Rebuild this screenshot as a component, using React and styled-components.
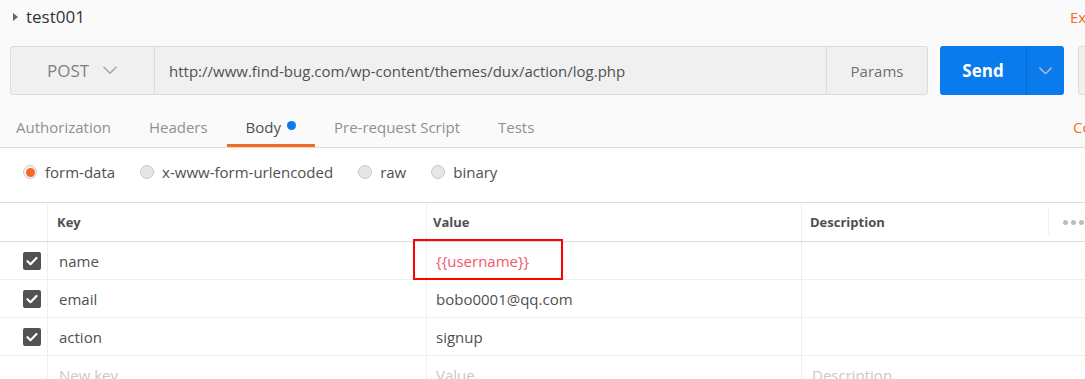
import React from "react";
import styled, { createGlobalStyle } from "styled-components";

const Global = createGlobalStyle`
  html, body { margin: 0; padding: 0; background: #fff; overflow: hidden; }
  body { font-family: "Open Sans", "Noto Sans", sans-serif; color: #505050; }
  * { box-sizing: border-box; }
`;

const Viewport = styled.div`
  width: 100vw;
  height: 100vh;
  overflow: hidden;
`;

const Page = styled.div`
  width: 1200px;
`;

const Top = styled.div`
  background: #fafafa;
`;

const TitleRow = styled.div`
  display: grid;
  grid-template-columns: 1070px auto;
  height: 33px;
  align-items: center;
`;

const Title = styled.div`
  display: flex;
  align-items: center;
  padding-left: 13px;
  color: #333;
  gap: 8px;
  font-size: 17px;
`;

const Caret = styled.span`
  width: 0;
  height: 0;
  border-top: 4px solid transparent;
  border-bottom: 4px solid transparent;
  border-left: 5px solid #666;
`;

const OrangeLink = styled.span`
  color: #f47023;
  font-size: 15px;
  white-space: nowrap;
`;

const UrlRow = styled.div`
  display: flex;
  margin-top: 13px;
  padding-left: 10px;
  height: 49px;
`;

const UrlGroup = styled.div`
  display: flex;
  width: 918px;
  background: #f0f0f0;
  border: 1px solid #dcdcdc;
  border-radius: 3px;
`;

const Method = styled.div`
  width: 144px;
  display: flex;
  align-items: center;
  padding-left: 36px;
  gap: 14px;
  font-size: 17px;
  color: #808080;
  border-right: 1px solid #dcdcdc;
`;

const UrlInput = styled.div`
  flex: 1;
  display: flex;
  align-items: center;
  padding-left: 14px;
  font-size: 15px;
  color: #505050;
  border-right: 1px solid #dcdcdc;
`;

const Params = styled.div`
  width: 100px;
  display: flex;
  align-items: center;
  justify-content: center;
  font-size: 15px;
  color: #707070;
`;

const SendGroup = styled.div`
  display: flex;
  margin-left: 12px;
  width: 124px;
  background: #097bed;
  border-radius: 3px;
  overflow: hidden;
`;

const SendMain = styled.div`
  width: 87px;
  display: flex;
  align-items: center;
  justify-content: center;
  color: #fff;
  font-weight: 700;
  font-size: 17px;
  border-right: 1px solid #0a68c8;
`;

const SendDrop = styled.div`
  flex: 1;
  display: flex;
  align-items: center;
  justify-content: center;
`;

const SaveBox = styled.div`
  margin-left: 14px;
  width: 100px;
  background: #f0f0f0;
  border: 1px solid #dcdcdc;
  border-radius: 3px;
`;

const TabBar = styled.div`
  display: grid;
  grid-template-columns: 1073px auto;
  margin-top: 10px;
  height: 43px;
  border-bottom: 1px solid #dcdcdc;
  align-items: stretch;
`;

const Tabs = styled.div`
  display: flex;
`;

const Tab = styled.div`
  position: relative;
  display: flex;
  align-items: center;
  gap: 6px;
  padding: 2px 19px 0;
  font-size: 15px;
  color: ${(p) => (p.$active ? "#505050" : "#909090")};
  &::after {
    content: "";
    position: absolute;
    left: 0;
    right: 0;
    bottom: 0;
    height: 3px;
    background: ${(p) => (p.$active ? "#f26b21" : "transparent")};
  }
  &:first-child { padding-left: 16px; }
`;

const Dot = styled.span`
  width: 9px;
  height: 9px;
  border-radius: 50%;
  background: #097bed;
  margin-top: -3px;
`;

const CookiesWrap = styled.div`
  display: flex;
  align-items: center;
  padding-top: 2px;
`;

const RadioRow = styled.div`
  display: flex;
  align-items: center;
  height: 54px;
  padding: 0 0 6px 23px;
  font-size: 15px;
`;

const RadioItem = styled.label`
  display: flex;
  align-items: center;
  gap: 8px;
  margin-right: ${(p) => p.$mr}px;
  color: #505050;
`;

const RadioCircle = styled.span`
  width: 14px;
  height: 14px;
  border-radius: 50%;
  border: 1px solid #c8c8c8;
  background: ${(p) => (p.$on ? "#f4f4f4" : "#e6e6e6")};
  display: flex;
  align-items: center;
  justify-content: center;
  &::after {
    content: "";
    width: 9px;
    height: 9px;
    border-radius: 50%;
    background: ${(p) => (p.$on ? "#f26b21" : "transparent")};
  }
`;

const Table = styled.div`
  border-top: 1px solid #dcdcdc;
`;

const Row = styled.div`
  position: relative;
  display: grid;
  grid-template-columns: 47px 379px 375px 247px 152px;
  height: ${(p) => (p.$head ? 39 : 38)}px;
  border-bottom: 1px solid ${(p) => (p.$head ? "#dcdcdc" : "#efefef")};
`;

const Cell = styled.div`
  display: flex;
  align-items: center;
  padding-left: ${(p) => p.$pl ?? 11}px;
  border-left: ${(p) => (p.$first ? "none" : "1px solid #efefef")};
  font-size: ${(p) => (p.$head ? 13 : 15)}px;
  font-weight: ${(p) => (p.$head ? 700 : 400)};
  color: ${(p) => (p.$ph ? "#c8c8c8" : p.$var ? "#f2576a" : "#505050")};
  white-space: nowrap;
`;

const CheckCell = styled.div`
  display: flex;
  align-items: center;
  padding-left: 23px;
`;

const CheckBox = styled.span`
  width: 18px;
  height: 18px;
  border-radius: 2px;
  background: #525252;
  display: flex;
  align-items: center;
  justify-content: center;
`;

const MoreCell = styled.div`
  display: flex;
  align-items: center;
  padding-left: 15px;
  gap: 3px;
  &::before {
    content: "";
    position: absolute;
    margin-left: -15px;
    height: 26px;
    border-left: 1px solid #efefef;
  }
`;

const MoreDot = styled.span`
  width: 5px;
  height: 5px;
  border-radius: 50%;
  background: #bdbdbd;
`;

const Highlight = styled.div`
  position: absolute;
  left: 413px;
  top: -3px;
  width: 150px;
  height: 41px;
  border: 2px solid #ff0000;
  pointer-events: none;
`;

const Chevron = ({ color, size = 14 }) => (
  <svg width={size} height={size * 0.6} viewBox="0 0 14 8" fill="none">
    <path d="M1 1l6 6 6-6" stroke={color} strokeWidth="1.6" strokeLinecap="round" strokeLinejoin="round" />
  </svg>
);

const Check = () => (
  <svg width="12" height="10" viewBox="0 0 12 10" fill="none">
    <path d="M1.5 5.2l3 3L10.5 2" stroke="#fff" strokeWidth="2.2" strokeLinecap="round" strokeLinejoin="round" />
  </svg>
);

const rows = [
  { key: "name", value: "{{username}}", isVar: true, mark: true },
  { key: "email", value: "bobo0001@qq.com" },
  { key: "action", value: "signup" },
];

export default function App() {
  return (
    <Viewport>
      <Global />
      <Page>
        <Top>
          <TitleRow>
            <Title>
              <Caret />
              test001
            </Title>
            <OrangeLink>Examples (0)</OrangeLink>
          </TitleRow>
          <UrlRow>
            <UrlGroup>
              <Method>
                POST
                <Chevron color="#a8a8a8" size={14} />
              </Method>
              <UrlInput>http://www.find-bug.com/wp-content/themes/dux/action/log.php</UrlInput>
              <Params>Params</Params>
            </UrlGroup>
            <SendGroup>
              <SendMain>Send</SendMain>
              <SendDrop>
                <Chevron color="#b2bccb" size={13} />
              </SendDrop>
            </SendGroup>
            <SaveBox />
          </UrlRow>
          <TabBar>
            <Tabs>
              <Tab>Authorization</Tab>
              <Tab>Headers</Tab>
              <Tab $active>
                Body
                <Dot />
              </Tab>
              <Tab>Pre-request Script</Tab>
              <Tab>Tests</Tab>
            </Tabs>
            <CookiesWrap>
              <OrangeLink>Cookies</OrangeLink>
            </CookiesWrap>
          </TabBar>
        </Top>
        <RadioRow>
          <RadioItem $mr={25}>
            <RadioCircle $on />
            form-data
          </RadioItem>
          <RadioItem $mr={25}>
            <RadioCircle />
            x-www-form-urlencoded
          </RadioItem>
          <RadioItem $mr={25}>
            <RadioCircle />
            raw
          </RadioItem>
          <RadioItem $mr={25}>
            <RadioCircle />
            binary
          </RadioItem>
        </RadioRow>
        <Table>
          <Row $head>
            <Cell $first />
            <Cell $head $pl={9}>Key</Cell>
            <Cell $head $pl={6}>Value</Cell>
            <Cell $head $pl={8}>Description</Cell>
            <MoreCell>
              <MoreDot />
              <MoreDot />
              <MoreDot />
            </MoreCell>
          </Row>
          {rows.map((r) => (
            <Row key={r.key}>
              <CheckCell>
                <CheckBox>
                  <Check />
                </CheckBox>
              </CheckCell>
              <Cell>{r.key}</Cell>
              <Cell $var={r.isVar} $pl={9}>{r.value}</Cell>
              <Cell />
              <Cell $first />
              {r.mark && <Highlight />}
            </Row>
          ))}
          <Row>
            <CheckCell />
            <Cell $ph>New key</Cell>
            <Cell $ph $pl={9}>Value</Cell>
            <Cell $ph $pl={10}>Description</Cell>
            <Cell $first />
          </Row>
        </Table>
      </Page>
    </Viewport>
  );
}
